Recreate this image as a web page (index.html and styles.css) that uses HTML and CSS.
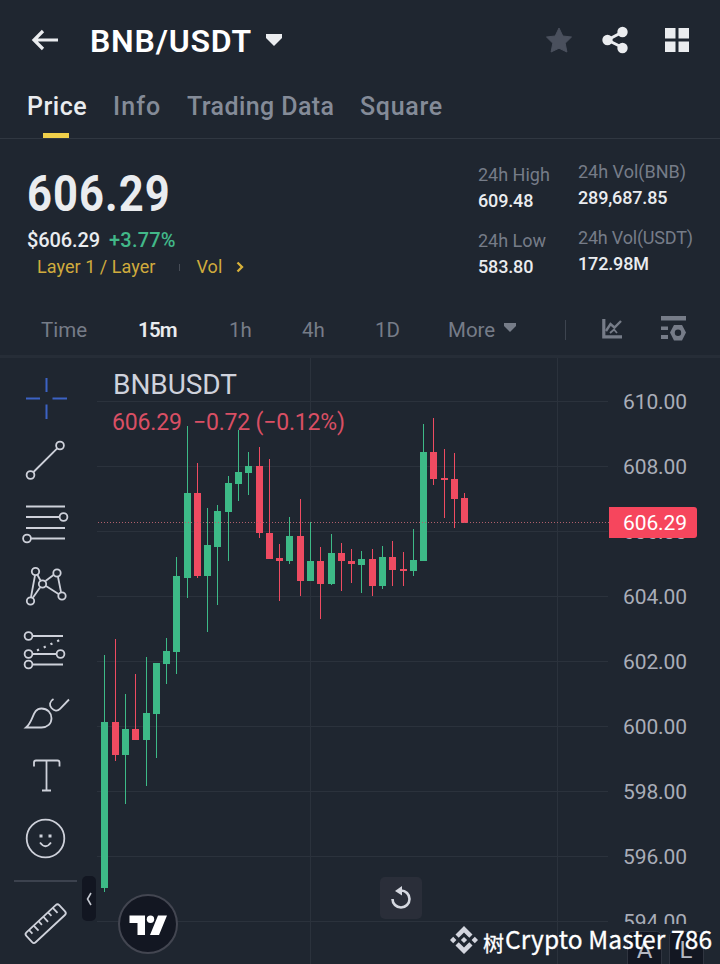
FILE: index.html
```
<!DOCTYPE html>
<html lang="en">
<head>
    <meta charset="UTF-8">
    <title>BNB/USDT</title>
    <link rel="stylesheet" href="styles.css">
</head>
<body>
<div class="app">
    <div class="header">
        <svg class="back" width="28" height="22" viewBox="0 0 28 22"><path d="M12 2 3 11l9 9M3 11h24" fill="none" stroke="#eaecef" stroke-width="3.2"/></svg>
        <h1>BNB/USDT</h1>
        <svg class="caret" width="18" height="14" viewBox="0 0 18 14"><path d="M1 1h16v4l-8 8-8-8z" fill="#eaecef"/></svg>
        <div class="actions">
            <svg width="28" height="28" viewBox="0 0 28 28"><path d="m14 2 3.8 8 8.7 1-6.3 6.2 1.7 8.8-7.9-3.8L6.100 26l1.700-8.800L1.500 11l8.700-1z" fill="#4a505d" stroke="#4a505d" stroke-linejoin="round"/></svg>
            <svg width="28" height="28" viewBox="0 0 28 28"><path d="M21.500 6 6.500 14l15 7.500" fill="none" stroke="#eaecef" stroke-width="3"/><g fill="#eaecef"><circle cx="21.500" cy="6" r="5.200"/><circle cx="6.500" cy="14" r="5.200"/><circle cx="21.500" cy="22" r="5.200"/></g></svg>
            <svg width="26" height="26" viewBox="0 0 26 26"><path d="M1 1h10.500v10.500H1zM14.500 1H25v10.500H14.500zM1 14.500h10.500V25H1zM14.500 14.500H25V25H14.500z" fill="#eaecef"/></svg>
        </div>
    </div>

    <ul class="tabs">
        <li class="current t1">Price</li>
        <li class="t2">Info</li>
        <li class="t3">Trading Data</li>
        <li class="t4">Square</li>
    </ul>

    <div class="ticker">
        <div class="last">
            <div class="price">606.29</div>
            <div class="change"><span>$606.29</span><span class="up">+3.77%</span></div>
            <div class="tags">
                <span>Layer 1 / Layer</span>
                <i></i>
                <span>Vol</span>
                <svg width="8" height="12" viewBox="0 0 8 12"><path d="m1.500 1.500 4.500 4.500-4.500 4.500" fill="none" stroke="#d8b13a" stroke-width="2.300"/></svg>
            </div>
        </div>
        <dl class="low">
            <dt>24h High</dt>
            <dd>609.48</dd>
            <dt>24h Low</dt>
            <dd>583.80</dd>
        </dl>
        <dl>
            <dt>24h Vol(BNB)</dt>
            <dd>289,687.85</dd>
            <dt class="usdt">24h Vol(USDT)</dt>
            <dd>172.98M</dd>
        </dl>
    </div>

    <div class="intervals">
        <span>Time</span>
        <span class="current">15m</span>
        <span>1h</span>
        <span>4h</span>
        <span>1D</span>
        <span>More <svg width="12" height="9" viewBox="0 0 12 9"><path d="M0 0h12v3L6 9 0 3z" fill="#767c88"/></svg></span>
        <i></i>
        <svg width="20" height="20" viewBox="0 0 20 20"><g fill="none" stroke="#767c88"><path d="M1.800 0v17.800H20" stroke-width="3.200"/><path d="m4 12 4.500-7 4 3.500L19 2" stroke-width="2.400"/><path d="m8 14 4-3.500 3 3.500" stroke-width="1.800"/></g></svg>
        <svg width="25" height="26" viewBox="0 0 25 26"><path d="M0 0h25v4.500H0zM0 10.500h7v3.500H0zM0 19h7v4H0z" fill="#767c88"/><path d="M13 9h8l4 7.500-4 8h-8l-4-8z" fill="#767c88"/><circle cx="17" cy="16.800" r="3.200" fill="#1f2630"/></svg>
    </div>

    <div class="chart">
        <div class="tools">
            <svg viewBox="0 0 97 63"><path d="M46.500 11v14M46.500 37.500V52M26 31.500h14M52.500 31.500H67" stroke="#3c62c4" stroke-width="2"/></svg>
            <svg viewBox="0 0 97 63"><path d="m33.500 42 23.700-23.700"/><circle cx="30.500" cy="45" r="3.900"/><circle cx="60" cy="15.500" r="3.900"/></svg>
            <svg viewBox="0 0 97 63"><path d="M26 13.500h39M26 24h33.500M26 35h39M31 45.500h34"/><circle cx="63.500" cy="24" r="3.900"/><circle cx="27" cy="45.500" r="3.900"/></svg>
            <svg viewBox="0 0 97 63"><path d="m35 19.500-4 21.500M37.500 19l3 5.500M53.500 19l-8 6M58 21l3 15M33 41.500l7-10M46 30l12.500 8"/><circle cx="35.500" cy="15.500" r="3.700"/><circle cx="57" cy="17" r="3.700"/><circle cx="42.500" cy="28" r="3.700"/><circle cx="30.500" cy="45" r="3.700"/><circle cx="62" cy="40" r="3.700"/></svg>
            <svg viewBox="0 0 97 63"><path d="M32.500 17H63M32.500 35h24M32.500 45.500H63"/><path d="m37 31.500 25-11.500" stroke-width="2.200" stroke-dasharray="2.200 5.200"/><circle cx="28.500" cy="17" r="3.900"/><circle cx="28.500" cy="35" r="3.900"/><circle cx="60.500" cy="35" r="3.900"/><circle cx="28.500" cy="45.500" r="3.900"/></svg>
            <svg viewBox="0 0 97 63"><path d="M26 45.500c8-6.500 6-19 15.500-19 6 0 10 4.500 10 9.800 0 5.500-4 9.200-10 9.200zM53.500 17c-4 2.500-4.500 6-2 9s6 3.500 8.500.800L69 17.500"/></svg>
            <svg viewBox="0 0 97 63"><path d="M34 21.500v-4q0-2 2-2h21.500q2 0 2 2v4M46.500 15.500v30M42 45.500h9"/></svg>
            <svg viewBox="0 0 97 63"><circle cx="45.500" cy="30.500" r="18.800"/><path d="M40 34.500q5.500 7.500 11 0"/><path d="M39.500 28h3M48.500 28h3" stroke-width="3"/></svg>
            <hr>
            <svg viewBox="0 0 97 63"><g transform="rotate(-43 45.500 31.500)"><rect x="23" y="25" width="45" height="13.500" rx="2.500"/><path d="M29 25v5M35.500 25v7M42 25v5M48.500 25v7M55 25v5M61.500 25v7"/></g></svg>
        </div>
        <svg class="plot" viewBox="97 358 623 606">
            <defs><clipPath id="axisClip"><rect x="610" y="358" width="110" height="566"/></clipPath></defs>
            <g id="grid"></g>
            <text x="113" y="394" class="symbol" textLength="124">BNBUSDT</text>
            <text x="112" y="430" class="delta" textLength="70">606.29</text>
            <text x="193" y="430" class="delta" textLength="152">−0.72 (−0.12%)</text>
            <g id="candles"></g>
            <path d="M98 522.500h511" stroke="#b0606c" stroke-dasharray="1 2"/>
            <g id="axis" clip-path="url(#axisClip)"></g>
            <path d="M609 507h85q3 0 3 3v25q0 3-3 3h-85z" fill="#f6465d"/>
            <text x="623" y="530" class="tag" textLength="64">606.29</text>

            <g class="keys">
                <rect x="627.500" y="931.500" width="34" height="40" rx="5"/>
                <rect x="669.500" y="931.500" width="34" height="40" rx="5"/>
                <text x="644.500" y="958">A</text>
                <text x="686" y="958">L</text>
            </g>

            <circle cx="148" cy="924" r="29" fill="#131722" stroke="#434651" stroke-width="2"/>
            <path d="M129.500 915.500h15.500v19.500h-7.500v-12h-8zM158 915.500h9l-8 19.500h-9z" fill="#fff"/>
            <circle cx="150.500" cy="919.300" r="3.700" fill="#fff"/>

            <rect x="380" y="877" width="42" height="42" rx="5" fill="#2a2e39"/>
            <path d="M392.500 899a8.500 8.500 0 1 0 8.500-8.500h-3" fill="none" stroke="#d5d8e0" stroke-width="2.600"/>
            <path d="m395 891 7-5v9.500z" fill="#d5d8e0"/>
        </svg>
        <div class="handle"><svg width="6" height="14" viewBox="0 0 6 14"><path d="M5 1 1.500 7 5 13" fill="none" stroke="#c4c8d0" stroke-width="1.600"/></svg></div>
        <div class="watermark">
            <svg width="28" height="28" viewBox="0 0 28 28"><path d="m14 0 8.500 8.500-3.200 3.200L14 6.400l-5.300 5.300-3.200-3.200zM14 28l-8.500-8.500 3.200-3.200 5.300 5.300 5.300-5.300 3.200 3.200zM14 10.900l3.100 3.100-3.100 3.100-3.100-3.100zM3.200 10.800 6.400 14l-3.200 3.200L0 14zM24.800 10.800 28 14l-3.200 3.200-3.200-3.200z" fill="#d3d5de"/></svg>
            <span class="tree">树</span>
            <span>Crypto Master 786</span>
        </div>
    </div>
</div>
<script src="script.js"></script>
</body>
</html>
```
FILE: styles.css
```
* {
    padding: 0;
    margin: 0;
    list-style: none;
    box-sizing: border-box;
}

body {
    background: #1f2630;
    color: #eaecef;
    font-family: Roboto, "Liberation Sans", sans-serif;
    overflow: hidden;
}

svg {
    display: block;
    flex: none;
}

.app {
    width: 720px;
    height: 964px;
    overflow: hidden;
}

.header {
    display: flex;
    align-items: center;
    height: 80px;
    padding: 0 30px 0 31px;
}

.header h1 {
    width: 174px;
    margin-left: 31px;
    margin-right: 1px;
    padding-top: 2px;
    font-size: 32px;
    font-weight: 600;
    line-height: 40px;
    letter-spacing: 0.8px;
    color: #fff;
}

.actions {
    display: flex;
    align-items: center;
    margin-left: auto;
    gap: 28px;
}

.actions svg:last-child {
    margin-left: 7px;
}

.tabs {
    display: flex;
    height: 59px;
    padding-left: 27px;
    border-bottom: 1px solid #303741;
    font-size: 25px;
    font-weight: 500;
    line-height: 53px;
    color: #848b98;
}

.tabs li {
    position: relative;
    height: 59px;
    white-space: nowrap;
}

.tabs .t1 {
    width: 86px;
    letter-spacing: 0.5px;
}

.tabs .t2 {
    width: 74px;
    letter-spacing: 1.1px;
}

.tabs .t3 {
    width: 173px;
    letter-spacing: 0.4px;
}

.tabs .t4 {
    letter-spacing: 0.7px;
}

.tabs .current {
    color: #eaecef;
}

.tabs .current::after {
    content: "";
    position: absolute;
    left: 16px;
    bottom: 1px;
    width: 26px;
    height: 5px;
    background: #f0cf4a;
}

.ticker {
    display: flex;
    height: 164px;
    padding-left: 27px;
}

.last {
    width: 451px;
    padding-top: 26px;
}

.price {
    font-size: 50px;
    font-weight: 700;
    line-height: 58px;
    letter-spacing: 1.2px;
    transform: scaleX(0.87);
    transform-origin: 0 0;
}

.change {
    display: flex;
    gap: 9px;
    font-size: 20px;
    font-weight: 500;
    line-height: 24px;
    margin-top: 5px;
    letter-spacing: -0.1px;
}

.up {
    color: #42b889;
    letter-spacing: 0.2px;
}

.tags {
    display: flex;
    align-items: center;
    padding-left: 10px;
    font-size: 18px;
    line-height: 30px;
    letter-spacing: 0.05px;
    color: #d0ab3d;
}

.tags i {
    width: 1px;
    height: 7px;
    margin: 0 17px 0 23px;
    background: #474d57;
}

.tags svg {
    margin-left: 14px;
}

.ticker dl {
    padding-top: 20px;
    font-size: 18px;
}

.ticker .low {
    width: 100px;
    padding-top: 23px;
}

.ticker dt {
    line-height: 26px;
    color: #767c88;
}

.ticker .usdt {
    letter-spacing: -0.2px;
}

.ticker dd {
    line-height: 26px;
    margin-bottom: 14px;
    font-weight: 500;
    letter-spacing: -0.15px;
}

.intervals {
    display: grid;
    grid-template-columns: 97px 91px 73px 73px 73px 117px 37px 59px 25px;
    align-items: center;
    height: 55px;
    padding-top: 1px;
    padding-left: 41px;
    border-bottom: 3px solid #262d37;
    font-size: 20.5px;
    color: #767c88;
}

.intervals .current {
    font-weight: 600;
    letter-spacing: -0.8px;
    color: #eaecef;
}

.intervals span svg {
    display: inline-block;
    margin: 0 0 5px 4px;
}

.intervals i {
    width: 1px;
    height: 20px;
    background: #3d444f;
}

.intervals > svg {
    margin-top: -2px;
}

.chart {
    position: relative;
    display: flex;
    height: 606px;
}

.tools {
    width: 97px;
    padding-top: 9px;
}

.tools svg {
    width: 97px;
    height: 63px;
    fill: none;
    stroke: #ced1da;
    stroke-width: 1.8px;
}

.tools hr {
    width: 63px;
    height: 2px;
    margin: 9px 0 10px 14px;
    border: 0;
    background: #3c424e;
}

.plot {
    width: 623px;
    height: 606px;
}

.plot text {
    font-family: Roboto, "Liberation Sans", sans-serif;
}

.plot .symbol {
    font-size: 28px;
    fill: #cfd2dc;
}

.plot .delta {
    font-size: 23px;
    fill: #d94f64;
}

.plot .label,
.plot .tag {
    font-size: 21px;
    fill: #a9adb8;
}

.plot .tag {
    fill: #fff;
}

.grid {
    stroke: #2b323c;
}

.keys rect {
    fill: #131722;
    stroke: #303540;
}

.keys text {
    font-size: 24px;
    text-anchor: middle;
    fill: #b5b8c2;
}

.handle {
    position: absolute;
    left: 82px;
    top: 518px;
    display: flex;
    align-items: center;
    justify-content: center;
    width: 14px;
    height: 45px;
    border-radius: 5px;
    background: #121621;
}

.watermark {
    position: absolute;
    left: 450px;
    bottom: 6px;
    display: flex;
    align-items: center;
    height: 36px;
    font-family: "Noto Sans CJK SC", sans-serif;
    font-size: 24.5px;
    font-weight: 400;
    line-height: 34px;
    letter-spacing: 0.1px;
    white-space: nowrap;
    color: #fff;
    -webkit-text-stroke: 0.3px #fff;
}

.watermark span {
    margin-top: -2px;
}

.watermark .tree {
    width: 22px;
    margin-left: 5px;
    padding-top: 5px;
    font-size: 21px;
}
```
FILE: script.js
```
var NS = "http://www.w3.org/2000/svg";
var UP = "#3dba87";
var DOWN = "#ee4b61";

// left edge, high, body top, body bottom, low, 1 = rising
var candles = [
    [101, 655, 722, 888, 892, 1],
    [112, 639, 722, 755, 761, 0],
    [122, 694, 729, 755, 804, 1],
    [132, 674, 729, 740, 740, 0],
    [143, 657, 713, 740, 786, 1],
    [153, 663, 663, 714, 758, 1],
    [163, 638, 651, 664, 684, 1],
    [173, 557, 576, 652, 674, 1],
    [184, 426, 493, 578, 598, 1],
    [194, 463, 493, 576, 578, 0],
    [204, 508, 545, 576, 632, 1],
    [214, 505, 511, 547, 605, 1],
    [225, 476, 483, 512, 561, 1],
    [235, 430, 472, 484, 501, 1],
    [245, 452, 466, 473, 495, 1],
    [256, 447, 466, 533, 538, 0],
    [266, 459, 533, 559, 559, 0],
    [276, 544, 558, 561, 601, 0],
    [286, 517, 536, 561, 564, 1],
    [297, 499, 536, 581, 596, 0],
    [307, 522, 561, 581, 581, 1],
    [317, 547, 561, 584, 619, 0],
    [328, 534, 553, 584, 585, 1],
    [338, 543, 553, 561, 591, 0],
    [348, 549, 561, 564, 583, 0],
    [358, 551, 559, 565, 593, 1],
    [369, 549, 559, 586, 596, 0],
    [379, 546, 557, 586, 589, 1],
    [389, 541, 557, 570, 586, 0],
    [400, 552, 569, 571, 586, 0],
    [410, 529, 560, 571, 576, 1],
    [420, 424, 452, 561, 561, 1],
    [430, 418, 452, 479, 485, 0],
    [441, 449, 478, 480, 518, 0],
    [451, 453, 479, 499, 528, 0],
    [461, 493, 498, 523, 523, 0]
];

function add(parent, tag, attrs) {
    var el = document.createElementNS(NS, tag);
    for (var k in attrs) {
        el.setAttribute(k, attrs[k]);
    }
    parent.appendChild(el);
    return el;
}

var grid = document.getElementById("grid");
var axis = document.getElementById("axis");
var box = document.getElementById("candles");

// price lines and labels, 65px per 2.00
for (var i = 0; i < 9; i++) {
    var y = 401.5 + i * 65;
    add(grid, "path", {d: "M97 " + y + "H608", "class": "grid"});
    var label = add(axis, "text", {x: 623, y: y + 7.5, textLength: 64, "class": "label"});
    label.textContent = (610 - i * 2).toFixed(2);
}
add(grid, "path", {d: "M310.5 358V964M557.5 358V964", "class": "grid"});

for (var j = 0; j < candles.length; j++) {
    var c = candles[j];
    var color = c[5] ? UP : DOWN;
    add(box, "rect", {x: c[0] + 3, y: c[1], width: 1, height: c[4] - c[1], fill: color});
    add(box, "rect", {x: c[0], y: c[2], width: 7, height: c[3] - c[2], fill: color});
}
```
